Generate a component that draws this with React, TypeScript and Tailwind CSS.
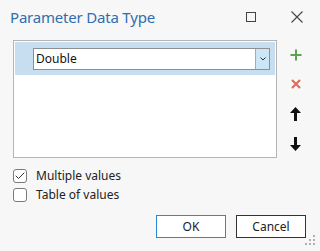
import { Check } from "lucide-react";

const font = { fontFamily: '"Noto Sans", "Open Sans", sans-serif' };

function CheckRow({ label, checked }: { label: string; checked: boolean }) {
  return (
    <div className="flex items-center h-[19px]">
      <div className="w-[14px] h-[14px] rounded-[3px] border border-[#7a7a7a] bg-white flex items-center justify-center">
        {checked && <Check size={12} strokeWidth={2} className="text-[#333]" />}
      </div>
      <span className="ml-[9px] text-[12px] text-[#222]">{label}</span>
    </div>
  );
}

export default function App() {
  return (
    <div
      className="w-[320px] h-[251px] bg-[#f7f7f7] relative overflow-hidden"
      style={font}
    >
      {/* title bar */}
      <div className="flex items-center h-[34px] pl-[10px]">
        <span className="text-[15px] text-[#2f6eb0] tracking-[-0.2px]">
          Parameter Data Type
        </span>
        <div className="ml-auto flex items-center">
          <div className="w-[10px] h-[10px] border border-[#444] mr-[35px]" />
          <svg width="12" height="12" viewBox="0 0 12 12" className="mr-[17px]">
            <path d="M0.5 0.5 L11.5 11.5 M11.5 0.5 L0.5 11.5" stroke="#444" strokeWidth="1.1" />
          </svg>
        </div>
      </div>

      {/* list + side buttons */}
      <div className="flex mt-[6px] pl-[13px]">
        <div className="w-[264px] h-[118px] bg-white border border-[#b4b4b4] p-[1px]">
          <div className="h-[33px] bg-[#c7ddf0] flex items-center pl-[18px] pr-[5px]">
            <div className="flex-1 h-[22px] bg-white border border-[#8f8f8f] flex items-center">
              <span className="pl-[2px] text-[12px] text-[#111] flex-1">Double</span>
              <div className="w-[14px] h-[20px] bg-[#cde6f7] border-l border-[#7eb4ea] flex items-center justify-center">
                <svg width="6" height="4" viewBox="0 0 6 4">
                  <path d="M0.5 0.5 L3 3 L5.5 0.5" stroke="#333" strokeWidth="1" fill="none" />
                </svg>
              </div>
            </div>
          </div>
        </div>
        <div className="flex flex-col items-center ml-[12px] pt-[9px] w-[13px]">
          <svg width="12" height="12" viewBox="0 0 12 12">
            <path d="M6 0.5 V11.5 M0.5 6 H11.5" stroke="#5aa352" strokeWidth="2" />
          </svg>
          <svg width="10" height="10" viewBox="0 0 10 10" className="mt-[18px]">
            <path d="M1 1 L9 9 M9 1 L1 9" stroke="#de6a55" strokeWidth="2" />
          </svg>
          <svg width="11" height="14" viewBox="0 0 11 14" className="mt-[18px]">
            <path d="M5.5 0 L11 6 H7 V14 H4 V6 H0 Z" fill="#111" />
          </svg>
          <svg width="11" height="14" viewBox="0 0 11 14" className="mt-[16px]">
            <path d="M5.5 14 L11 8 H7 V0 H4 V8 H0 Z" fill="#111" />
          </svg>
        </div>
      </div>

      {/* options */}
      <div className="flex flex-col pl-[13px] mt-[8px]">
        <CheckRow label="Multiple values" checked />
        <CheckRow label="Table of values" checked={false} />
      </div>

      {/* buttons */}
      <div className="flex justify-end gap-[10px] pr-[14px] mt-[11px]">
        <button className="w-[70px] h-[23px] bg-white border border-[#2b88d8] text-[12px] text-[#222]">
          OK
        </button>
        <button className="w-[70px] h-[23px] bg-white border border-[#333] text-[12px] text-[#222]">
          Cancel
        </button>
      </div>

      {/* resize grip */}
      <svg width="12" height="12" viewBox="0 0 12 12" className="absolute right-[3px] bottom-[4px]">
        <g fill="#b0b0b0">
          <rect x="8" y="0" width="2" height="2" />
          <rect x="4" y="4" width="2" height="2" />
          <rect x="8" y="4" width="2" height="2" />
          <rect x="0" y="8" width="2" height="2" />
          <rect x="4" y="8" width="2" height="2" />
          <rect x="8" y="8" width="2" height="2" />
        </g>
      </svg>
    </div>
  );
}
